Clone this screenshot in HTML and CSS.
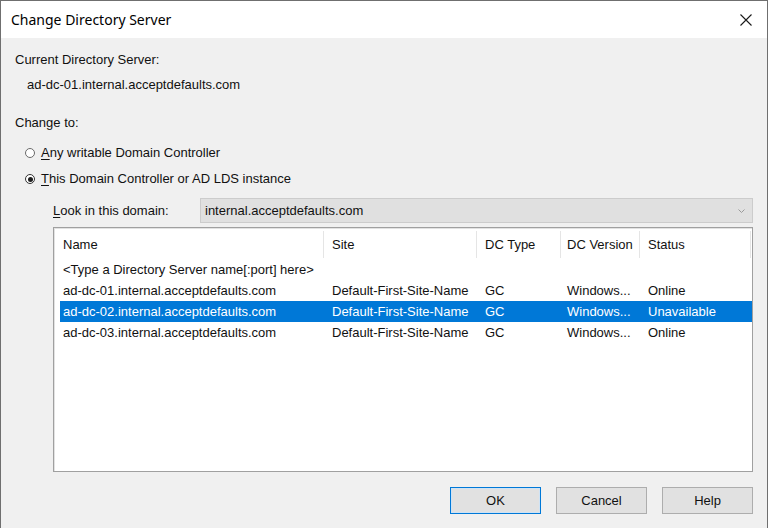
FILE: index.html
```html
<!DOCTYPE html>
<html>
<head>
<meta charset="utf-8">
<title>Change Directory Server</title>
<link rel="stylesheet" href="styles.css">
</head>
<body>
<div class="window">
  <div class="titlebar">
    <span class="title">Change Directory Server</span>
    <svg class="close" width="12" height="12" viewBox="0 0 12 12"><path d="M0.5 0.5 L11.5 11.5 M11.5 0.5 L0.5 11.5" stroke="#1a1a1a" stroke-width="1.1" fill="none"/></svg>
  </div>
  <div class="body">
    <div class="line">Current Directory Server:</div>
    <div class="line current">ad-dc-01.internal.acceptdefaults.com</div>
    <div class="line changeto">Change to:</div>
    <div class="radio r1"><span class="circle"></span><span><u>A</u>ny writable Domain Controller</span></div>
    <div class="radio r2"><span class="circle checked"></span><span><u>T</u>his Domain Controller or AD LDS instance</span></div>
    <div class="domain-row">
      <span class="domain-label"><u>L</u>ook in this domain:</span>
      <div class="combo">
        <span>internal.acceptdefaults.com</span>
        <svg class="chev" width="7" height="4" viewBox="0 0 7 4"><path d="M0.5 0.5 L3.5 3.5 L6.5 0.5" stroke="#9a9a9a" stroke-width="1" fill="none"/></svg>
      </div>
    </div>
    <div class="list">
      <div class="lv-head">
        <div class="cell c1">Name</div>
        <div class="cell c2">Site</div>
        <div class="cell c3">DC Type</div>
        <div class="cell c4">DC Version</div>
        <div class="cell c5">Status</div>
      </div>
      <div class="lv-rows">
        <div class="lv-row">
          <div class="cell c1 wide">&lt;Type a Directory Server name[:port] here&gt;</div>
        </div>
        <div class="lv-row">
          <div class="cell c1">ad-dc-01.internal.acceptdefaults.com</div>
          <div class="cell c2">Default-First-Site-Name</div>
          <div class="cell c3">GC</div>
          <div class="cell c4">Windows...</div>
          <div class="cell c5">Online</div>
        </div>
        <div class="lv-row selected">
          <div class="cell c1">ad-dc-02.internal.acceptdefaults.com</div>
          <div class="cell c2">Default-First-Site-Name</div>
          <div class="cell c3">GC</div>
          <div class="cell c4">Windows...</div>
          <div class="cell c5">Unavailable</div>
        </div>
        <div class="lv-row">
          <div class="cell c1">ad-dc-03.internal.acceptdefaults.com</div>
          <div class="cell c2">Default-First-Site-Name</div>
          <div class="cell c3">GC</div>
          <div class="cell c4">Windows...</div>
          <div class="cell c5">Online</div>
        </div>
      </div>
    </div>
    <div class="buttons">
      <button class="btn default">OK</button>
      <button class="btn">Cancel</button>
      <button class="btn">Help</button>
    </div>
  </div>
</div>
</body>
</html>
```
FILE: styles.css
```css
html, body {
  margin: 0;
  padding: 0;
  background: #f0f0f0;
}
.window {
  width: 768px;
  height: 528px;
  box-sizing: border-box;
  border: 1px solid #6f6f6f;
  border-bottom: none;
  display: flex;
  flex-direction: column;
  font-family: "Liberation Sans", Arial, sans-serif;
  font-size: 13px;
  color: #111;
  overflow: hidden;
}
.titlebar {
  height: 37px;
  flex: none;
  background: #fff;
  display: flex;
  align-items: center;
  justify-content: space-between;
  padding: 0 15px 0 10px;
}
.title {
  font-family: "Noto Sans", "Open Sans", sans-serif;
  font-size: 14px;
  color: #000;
}
.close {
  display: block;
}
.body {
  flex: 1;
  background: #f0f0f0;
  padding: 14px 14px 0 14px;
  display: flex;
  flex-direction: column;
}
.line {
  height: 16px;
  line-height: 16px;
  white-space: nowrap;
}
.current {
  margin-top: 9px;
  padding-left: 12px;
}
.changeto {
  margin-top: 22px;
}
.radio {
  height: 16px;
  line-height: 16px;
  display: flex;
  align-items: center;
  padding-left: 10px;
  gap: 6px;
  white-space: nowrap;
}
.r1 { margin-top: 14px; }
.r2 { margin-top: 10px; }
.circle {
  width: 10px;
  height: 10px;
  box-sizing: border-box;
  border: 1px solid #6a6a6a;
  border-radius: 50%;
  background: #fff;
  display: flex;
  align-items: center;
  justify-content: center;
}
.circle.checked {
  border-color: #333;
}
.circle.checked::after {
  content: "";
  width: 5px;
  height: 5px;
  border-radius: 50%;
  background: #1e1e1e;
}
u {
  text-decoration: underline;
  text-underline-offset: 2px;
}
.domain-row {
  margin-top: 11px;
  margin-left: 38px;
  display: flex;
  align-items: center;
  height: 25px;
}
.domain-label {
  width: 147px;
  flex: none;
  white-space: nowrap;
}
.combo {
  flex: 1;
  height: 25px;
  box-sizing: border-box;
  border: 1px solid #cccccc;
  background: #e0e0e0;
  display: flex;
  align-items: center;
  justify-content: space-between;
  padding: 0 7px 0 4px;
}
.chev {
  display: block;
  margin-top: 1px;
}
.list {
  margin-top: 4px;
  margin-left: 38px;
  height: 245px;
  box-sizing: border-box;
  border: 1px solid #a0a0a0;
  box-shadow: inset 1px 1px 0 #e2e2e2;
  background: #fff;
  padding-left: 6px;
}
.lv-head {
  display: grid;
  grid-template-columns: 264px 153px 84px 79px 111px;
  height: 30px;
}
.lv-head .cell {
  margin-top: 3px;
  border-right: 1px solid #e5e5e5;
  display: flex;
  align-items: center;
}
.lv-rows {
  padding-top: 1px;
}
.lv-row {
  display: grid;
  grid-template-columns: 264px 153px 84px 79px 111px;
  height: 21px;
  align-items: center;
}
.lv-row.selected {
  background: #0078d7;
  color: #fff;
}
.cell {
  white-space: nowrap;
  box-sizing: border-box;
}
.c1 { padding-left: 3px; }
.c2 { padding-left: 8px; }
.c3 { padding-left: 8px; }
.c4 { padding-left: 6px; }
.c5 { padding-left: 8px; }
.wide {
  grid-column: 1 / 6;
}
.buttons {
  margin-top: 15px;
  display: flex;
  justify-content: flex-end;
  gap: 15px;
}
.btn {
  width: 91px;
  height: 27px;
  box-sizing: border-box;
  border: 1px solid #adadad;
  background: #e1e1e1;
  font-family: "Liberation Sans", Arial, sans-serif;
  font-size: 13px;
  color: #111;
  padding: 0;
  margin: 0;
}
.btn.default {
  border: 1px solid #0078d7;
  box-shadow: inset 0 0 0 1px #cfe3f5;
}
```
